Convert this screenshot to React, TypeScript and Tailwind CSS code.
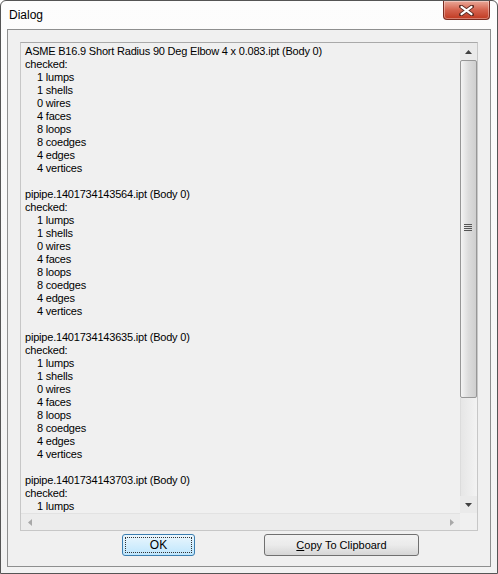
import React from 'react'

const BODIES = [
  'ASME B16.9 Short Radius 90 Deg Elbow 4 x 0.083.ipt (Body 0)',
  'pipipe.1401734143564.ipt (Body 0)',
  'pipipe.1401734143635.ipt (Body 0)',
  'pipipe.1401734143703.ipt (Body 0)',
]

const COUNTS = ['1 lumps', '1 shells', '0 wires', '4 faces', '8 loops', '8 coedges', '4 edges', '4 vertices']

const mono = { fontFamily: '"Liberation Sans", Arial, sans-serif' }
const ui = { fontFamily: '"Liberation Sans", Arial, sans-serif' }

function Arrow({ dir }: { dir: 'up' | 'down' | 'left' | 'right' }) {
  const pts = {
    up: '0,4 7,4 3.5,0',
    down: '0,0 7,0 3.5,4',
    left: '4,0 4,7 0,3.5',
    right: '0,0 0,7 4,3.5',
  }[dir]
  const vertical = dir === 'up' || dir === 'down'
  return (
    <svg width={vertical ? 7 : 4} height={vertical ? 4 : 7} viewBox={vertical ? '0 0 7 4' : '0 0 4 7'}>
      <polygon points={pts} fill={vertical ? '#404040' : '#a8a8a8'} />
    </svg>
  )
}

function CloseButton() {
  return (
    <div className="absolute right-[7px] top-0 flex h-[19px] w-[47px] items-center justify-center rounded-b-[4px] border border-t-0 border-[#7a2d22] bg-gradient-to-b from-[#e9a899] via-[#d4624e] to-[#c0381f] shadow-[inset_0_0_0_1px_rgba(255,255,255,0.35)]">
      <svg width="15" height="11" viewBox="0 0 15 11">
        <path d="M2 1.5 L13 9.5 M13 1.5 L2 9.5" stroke="#5a2a22" strokeWidth="4" strokeLinecap="round" />
        <path d="M2.5 1.8 L12.5 9.2 M12.5 1.8 L2.5 9.2" stroke="#ffffff" strokeWidth="2.2" strokeLinecap="round" />
      </svg>
    </div>
  )
}

function VScrollbar() {
  return (
    <div className="flex w-[17px] flex-col bg-[#eaeaea]">
      <div className="flex h-[17px] items-center justify-center">
        <Arrow dir="up" />
      </div>
      <div className="relative h-[338px] rounded-[2px] border border-[#979797] bg-gradient-to-r from-[#f4f4f4] via-[#dcdcdc] to-[#cfcfcf]">
        <div className="absolute left-[3px] top-[163px] flex flex-col gap-[1px]">
          {[0, 1, 2, 3].map((i) => (
            <div key={i} className="h-[1px] w-[8px] bg-[#555555]" />
          ))}
        </div>
      </div>
      <div className="flex-1 border-l border-[#dcdcdc] bg-gradient-to-r from-[#e6e6e6] to-[#f3f3f3]" />
      <div className="flex h-[17px] items-center justify-center">
        <Arrow dir="down" />
      </div>
    </div>
  )
}

function HScrollbar() {
  return (
    <div className="flex h-[17px] flex-1 items-center border-t border-[#e2e2e2] bg-[#ececec]">
      <div className="flex w-[17px] justify-center">
        <Arrow dir="left" />
      </div>
      <div className="flex-1" />
      <div className="flex w-[17px] justify-center">
        <Arrow dir="right" />
      </div>
    </div>
  )
}

export default function App() {
  return (
    <div className="relative h-[574px] w-[498px] overflow-hidden rounded-t-[6px] border border-[#555555] bg-gradient-to-b from-[#fdfdfd] to-[#f2f2f2]">
      {/* title bar */}
      <div className="flex h-[28px] items-center pl-[8px] text-[12px] text-black" style={ui}>
        Dialog
      </div>
      <CloseButton />

      {/* client area */}
      <div className="mx-[6px] flex h-[538px] flex-col border border-[#8e8f8f] bg-[#f0f0f0]">
        <div className="px-[12px] pt-[12px]">
          <div className="flex h-[489px] flex-col border border-[#c7c7c7] border-t-[#a9a9a9]">
            <div className="flex min-h-0 flex-1">
              <div className="min-w-0 flex-1 overflow-hidden pl-[4px] pt-[2px] text-[11px] leading-[13px] tracking-[-0.2px] text-black" style={mono}>
                {BODIES.map((b, i) => (
                  <div key={b} className="mb-[13px]">
                    <div className="whitespace-nowrap">{b}</div>
                    <div>checked:</div>
                    {/* only the first count of the last body is in view */}
                    {(i === BODIES.length - 1 ? COUNTS.slice(0, 1) : COUNTS).map((c) => (
                      <div key={c} className="pl-[12px]">
                        {c}
                      </div>
                    ))}
                  </div>
                ))}
              </div>
              <VScrollbar />
            </div>
            <div className="flex">
              <HScrollbar />
              <div className="h-[17px] w-[17px] bg-[#f0f0f0]" />
            </div>
          </div>
        </div>

        {/* buttons */}
        <div className="mt-[3px] flex pl-[114px]" style={ui}>
          <button className="flex h-[22px] w-[73px] items-center justify-center rounded-[3px] border border-[#3c7fb1] bg-gradient-to-b from-[#eaf6fd] to-[#bee6fd] p-[2px] text-[12px] text-black">
            <span className="flex h-full w-full items-center justify-center border border-dotted border-[#333333]">OK</span>
          </button>
          <button className="ml-[69px] flex h-[22px] w-[155px] items-center justify-center rounded-[3px] border border-[#707070] bg-gradient-to-b from-[#f2f2f2] via-[#ebebeb] to-[#d6d6d6] text-[11px] text-black">
            <span>
              <span className="underline">C</span>opy To Clipboard
            </span>
          </button>
        </div>
      </div>
    </div>
  )
}
